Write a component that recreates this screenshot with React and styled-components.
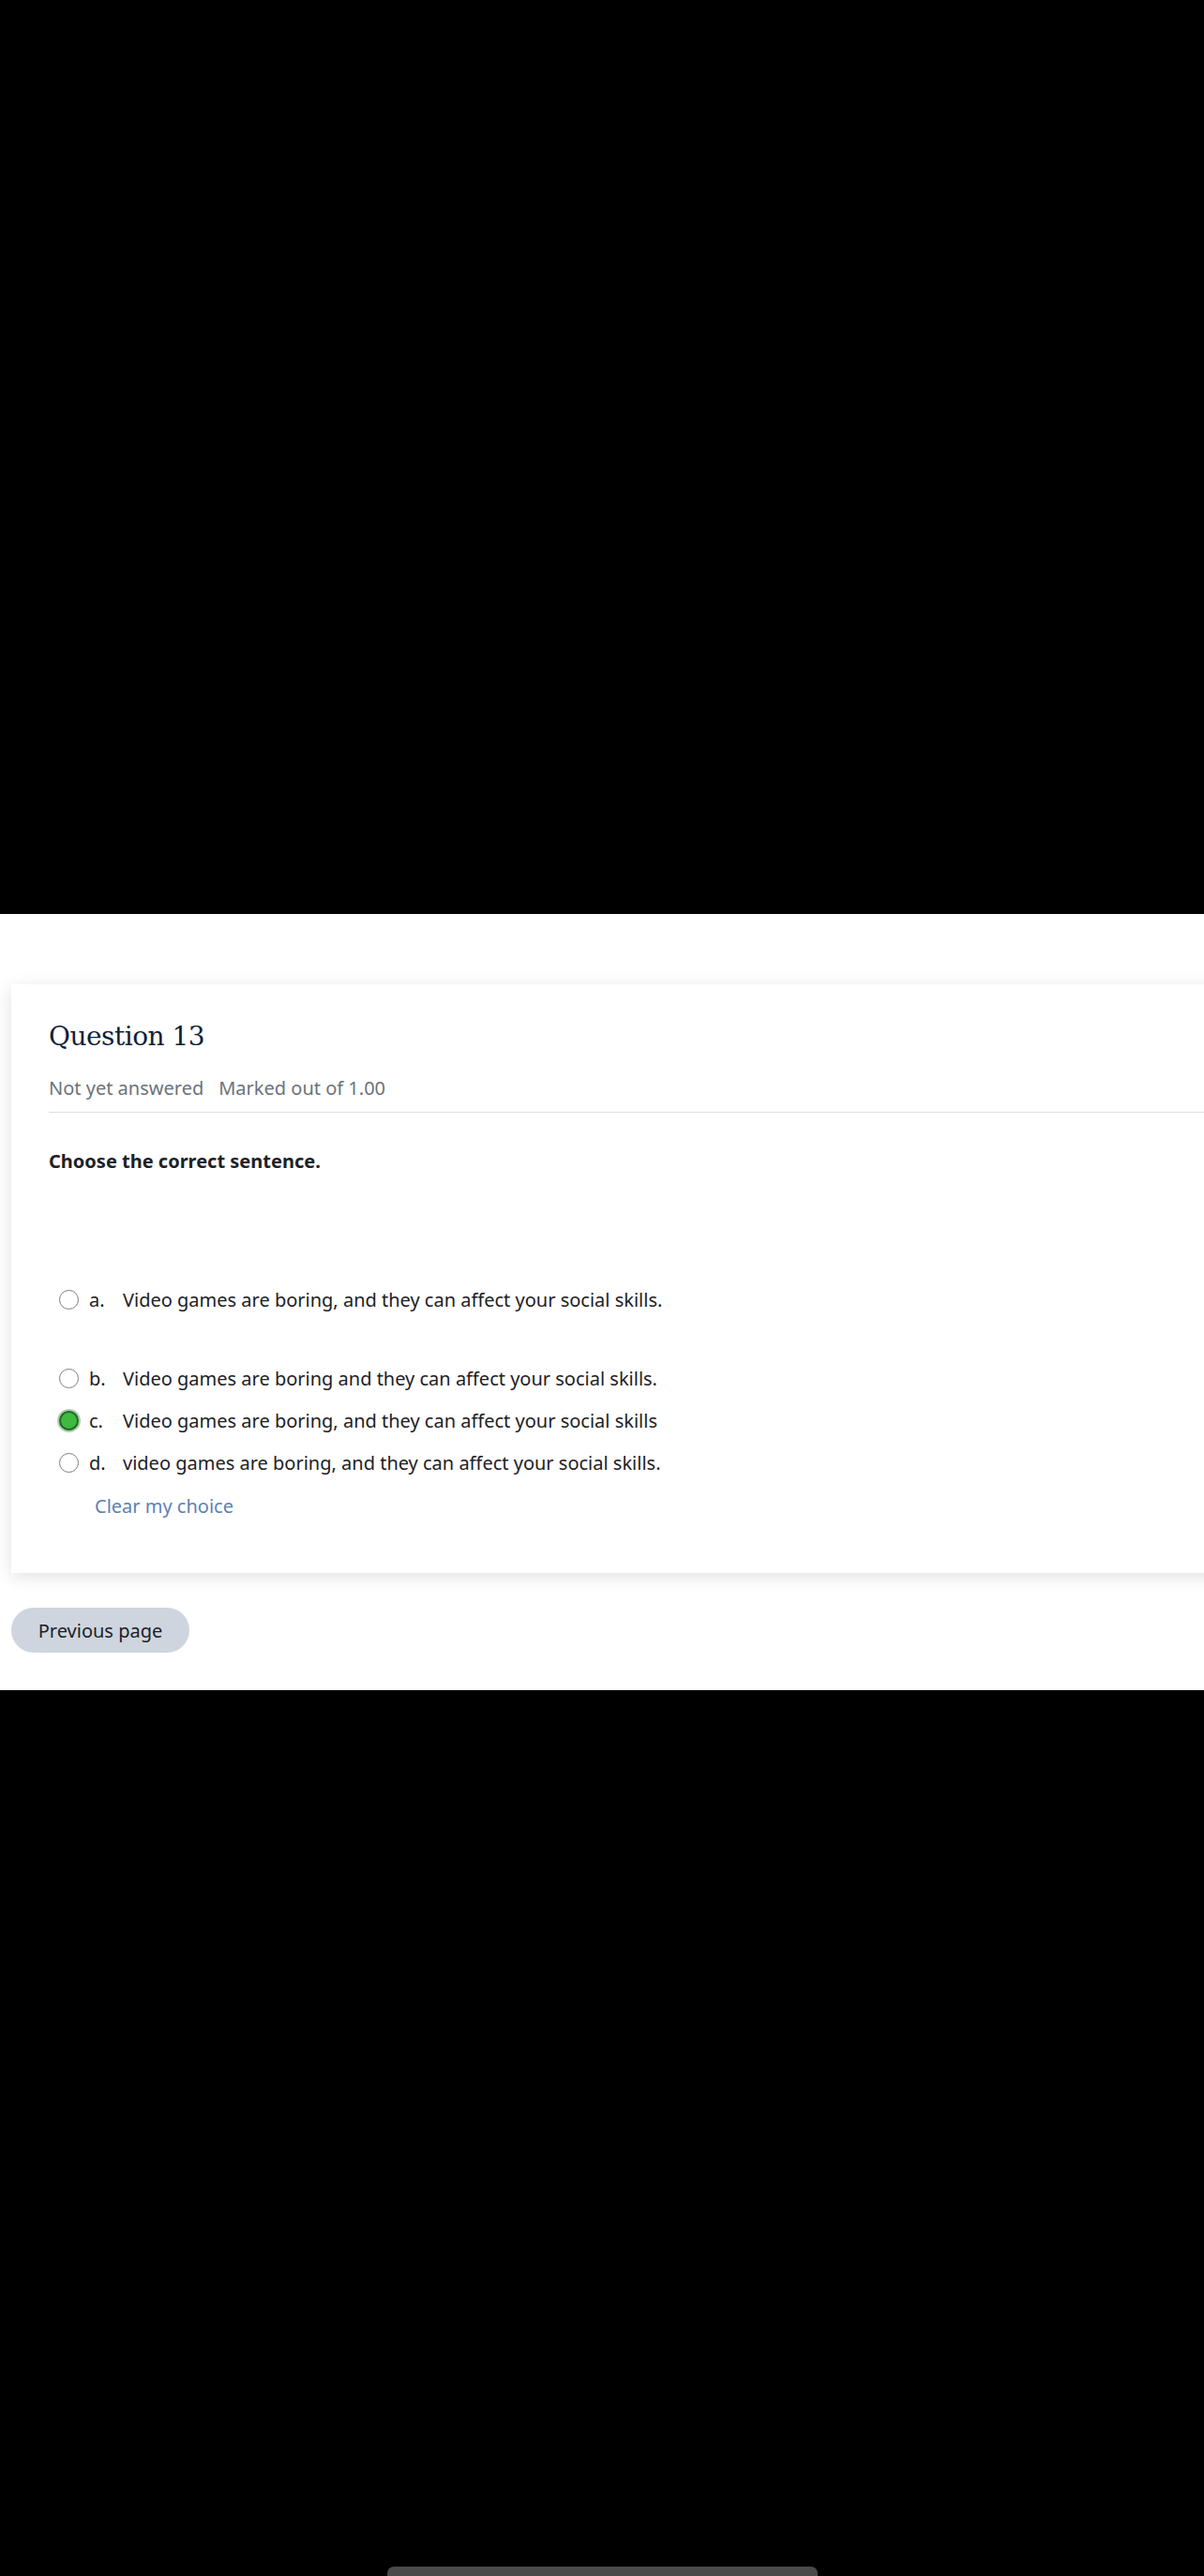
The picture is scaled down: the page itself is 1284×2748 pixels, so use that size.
import React from "react";
import styled, { createGlobalStyle } from "styled-components";

const Global = createGlobalStyle`
  html, body { margin: 0; padding: 0; background: #000; }
  body { font-family: "Noto Sans", "Open Sans", sans-serif; overflow-x: hidden; }
  * { box-sizing: border-box; }
`;

const Page = styled.div`
  width: 1284px;
  height: 2748px;
  display: flex;
  flex-direction: column;
  background: #000;
`;

const TopBlack = styled.div`
  height: 975px;
  flex: none;
  background: #000;
`;

const Sheet = styled.section`
  height: 828px;
  flex: none;
  background: #fff;
  padding: 75px 0 0 12px;
  overflow: hidden;
  display: flex;
  flex-direction: column;
`;

const Card = styled.div`
  margin-right: -60px;
  height: 628px;
  flex: none;
  background: #fff;
  box-shadow: 0 4px 18px rgba(0, 0, 0, 0.12);
  padding: 36px 0 0 40px;
  display: flex;
  flex-direction: column;
`;

const Title = styled.h3`
  margin: 0;
  font-family: "DejaVu Serif", serif;
  font-weight: 400;
  font-size: 28px;
  line-height: 40px;
  color: #0f1f3d;
  letter-spacing: -0.5px;
`;

const Meta = styled.div`
  display: flex;
  gap: 16px;
  margin-top: 20px;
  padding-bottom: 10px;
  border-bottom: 1.5px solid #dcdfe3;
  font-size: 20px;
  line-height: 30px;
  color: #6a737b;
`;

const Prompt = styled.p`
  margin: 37px 0 0;
  font-size: 20px;
  line-height: 30px;
  font-weight: 700;
  color: #1d2125;
`;

const Options = styled.div`
  display: flex;
  flex-direction: column;
  margin-top: 110px;
`;

const Option = styled.label`
  display: flex;
  align-items: center;
  height: 45px;
  padding-left: 11px;
  margin-bottom: ${(p) => (p.$extra ? "39px" : "0")};
  font-size: 20px;
  color: #1d2125;
`;

const Radio = styled.span`
  width: 21px;
  height: 21px;
  flex: none;
  border-radius: 50%;
  border: ${(p) => (p.$checked ? "2px solid #1d6b22" : "1.5px solid #7d7d7d")};
  background: ${(p) => (p.$checked ? "#3dba3f" : "#fff")};
  box-shadow: ${(p) => (p.$checked ? "0 0 0 2px rgba(30,110,35,0.35)" : "none")};
`;

const Letter = styled.span`
  width: 36px;
  margin-left: 11px;
  flex: none;
`;

const OptionText = styled.span``;

const ClearLink = styled.a`
  margin: 9px 0 0 49px;
  font-size: 20px;
  line-height: 30px;
  color: #5b82b4;
  text-decoration: none;
`;

const PrevButton = styled.button`
  margin-top: 37px;
  align-self: flex-start;
  width: 190px;
  height: 48px;
  border: none;
  border-radius: 24px;
  background: #ced5df;
  color: #1d2125;
  font-family: "Noto Sans", "Open Sans", sans-serif;
  font-size: 20px;
  padding: 0;
`;

const BottomBlack = styled.div`
  flex: 1;
  background: #000;
  display: flex;
  flex-direction: column;
  align-items: center;
  justify-content: flex-end;
`;

const HomeBar = styled.div`
  width: 459px;
  height: 10px;
  background: #4a4a4a;
  border-radius: 7px 7px 0 0;
`;

const options = [
  { l: "a.", t: "Video games are boring, and they can affect your social skills.", extra: true },
  { l: "b.", t: "Video games are boring and they can affect your social skills." },
  { l: "c.", t: "Video games are boring, and they can affect your social skills", checked: true },
  { l: "d.", t: "video games are boring, and they can affect your social skills." },
];

export default function App() {
  return (
    <>
      <Global />
      <Page>
        <TopBlack />
        <Sheet>
          <Card>
            <Title>Question 13</Title>
            <Meta>
              <span>Not yet answered</span>
              <span>Marked out of 1.00</span>
            </Meta>
            <Prompt>Choose the correct sentence.</Prompt>
            <Options>
              {options.map((o) => (
                <Option key={o.l} $extra={o.extra}>
                  <Radio $checked={o.checked} />
                  <Letter>{o.l}</Letter>
                  <OptionText>{o.t}</OptionText>
                </Option>
              ))}
            </Options>
            <ClearLink href="#">Clear my choice</ClearLink>
          </Card>
          <PrevButton>Previous page</PrevButton>
        </Sheet>
        <BottomBlack>
          <HomeBar />
        </BottomBlack>
      </Page>
    </>
  );
}
